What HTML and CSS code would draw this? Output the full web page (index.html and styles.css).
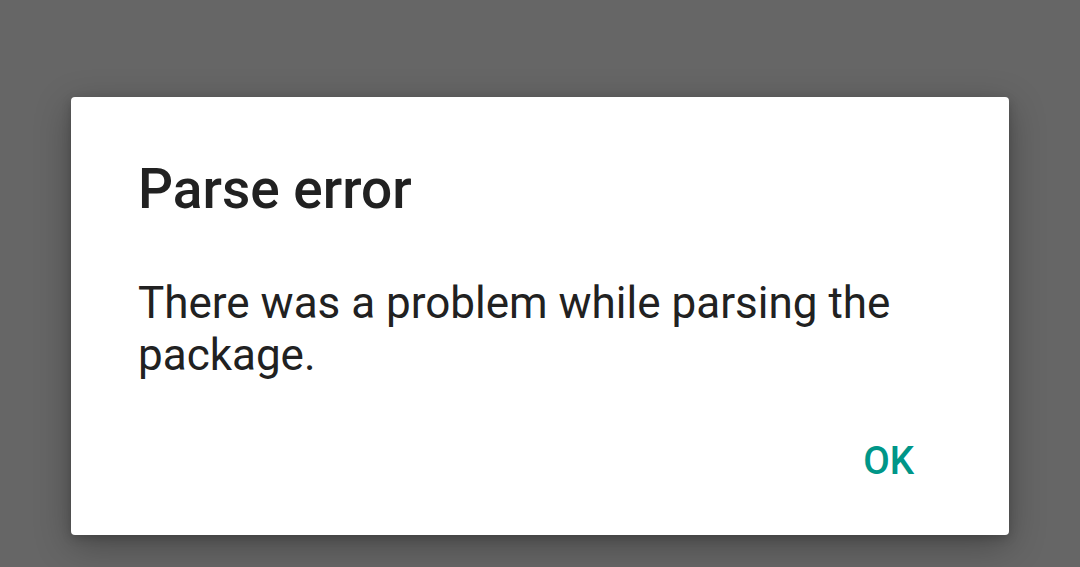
FILE: index.html
```html
<!DOCTYPE html>
<html>
<head>
<meta charset="utf-8">
<link rel="stylesheet" href="styles.css">
</head>
<body>
<div class="screen">
  <div class="dialog">
    <h1 class="title">Parse error</h1>
    <p class="message">There was a problem while parsing the package.</p>
    <div class="actions">
      <button class="btn">OK</button>
    </div>
  </div>
</div>
</body>
</html>
```
FILE: styles.css
```css
html, body {
  margin: 0;
  padding: 0;
  width: 1080px;
  height: 567px;
  overflow: hidden;
  background: #666666;
  font-family: Roboto, "Noto Sans", sans-serif;
}
.screen {
  width: 1080px;
  height: 567px;
  padding-top: 97px;
  padding-left: 71px;
  box-sizing: border-box;
}
.dialog {
  width: 938px;
  height: 438px;
  box-sizing: border-box;
  background: #ffffff;
  border-radius: 4px;
  box-shadow: 0 10px 36px rgba(0,0,0,0.3), 0 3px 10px rgba(0,0,0,0.18);
  padding: 60px 66px 0 67px;
  display: flex;
  flex-direction: column;
}
.title {
  margin: 0;
  font-size: 55px;
  font-weight: 500;
  line-height: 64px;
  color: #212121;
}
.message {
  margin: 56px 0 0 0;
  font-size: 44px;
  font-weight: 400;
  line-height: 52px;
  color: #212121;
  width: 780px;
}
.actions {
  display: flex;
  justify-content: flex-end;
  margin-top: 58px;
  padding-right: 29px;
}
.btn {
  border: none;
  background: none;
  padding: 0;
  font-family: Roboto, "Noto Sans", sans-serif;
  font-size: 38.5px;
  font-weight: 500;
  color: #009688;
  line-height: 44px;
}
```
